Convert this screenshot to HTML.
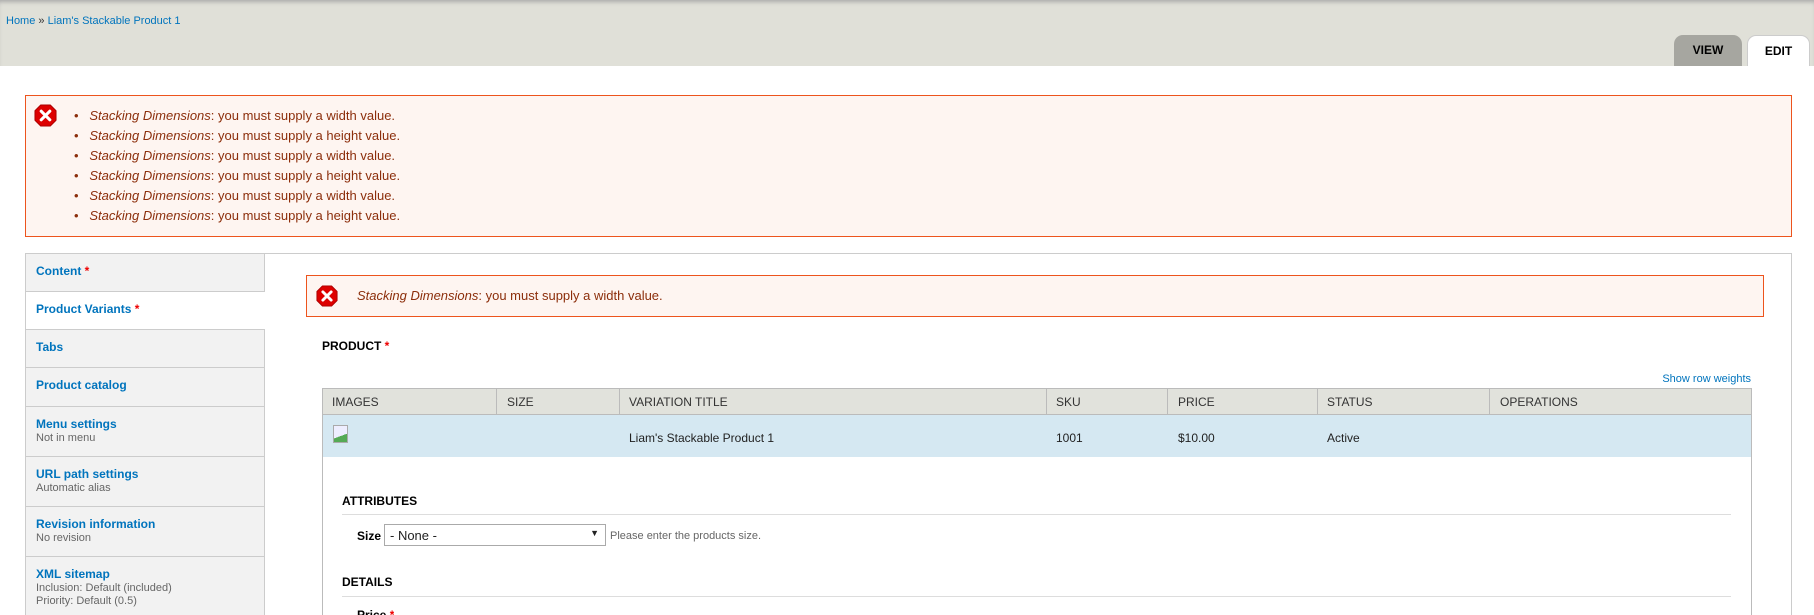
<!DOCTYPE html>
<html style="overflow:hidden;height:615px"><head><meta charset="utf-8"><style>
*{margin:0;padding:0;box-sizing:border-box}
body{width:1814px;height:615px;overflow:hidden;background:#fff;font-family:"Liberation Sans",Arial,sans-serif;color:#333;position:relative}
.a{position:absolute}
a{color:#0074bd;text-decoration:none}
.hdr{left:0;top:0;width:1814px;height:66px;background:#e0e0d8;box-shadow:inset 0 4px 4px -2px #aaa}
.tab{top:35px;height:31px;border-radius:9px 9px 0 0;font-weight:bold;font-size:12px;color:#000;text-align:center;line-height:31px}
.err{background:#fef5f1;border:1px solid #ed541d;color:#8c2e0b;font-size:13px}
.icon{width:23px;height:23px}
.sb{left:25px;width:240px;background:#f2f2f2;border-bottom:1px solid #ccc;border-right:1px solid #ccc;border-left:1px solid #ccc;padding:10px 0 0 10px;font-size:12px}
.sb b{color:#0074bd;display:block;font-size:12px}
.sb span{color:#666;font-size:11px;display:block;line-height:13px;margin-top:1px}
.sb span.req,.req{color:#e00;display:inline;font-size:12px;margin:0}
.th{top:389px;height:26px;font-size:12px;color:#333;line-height:26px}
.td{top:431px;font-size:12px;color:#222}
.vd{top:389px;width:1px;height:26px;background:#bbb}
h4{font-size:12px;color:#000}
</style></head><body>
<div class="a hdr"></div>
<div class="a" style="left:6px;top:15px;font-size:11px"><a>Home</a> » <a>Liam's Stackable Product 1</a></div>
<div class="a tab" style="left:1674px;width:68px;background:#a6a6a0">VIEW</div>
<div class="a tab" style="left:1747px;width:63px;background:#fff;border:1px solid #ccc;border-bottom:none">EDIT</div>

<div class="a err" style="left:25px;top:95px;width:1767px;height:142px"></div>
<svg class="a icon" style="left:34px;top:104px" viewBox="0 0 24 24"><polygon points="7,1 17,1 23,7 23,17 17,23 7,23 1,17 1,7" fill="#d00" stroke="#a00" stroke-linejoin="round"/><path d="M7.5 7.5L16.5 16.5M16.5 7.5L7.5 16.5" stroke="#fff" stroke-width="3.2" stroke-linecap="round"/></svg>
<div class="a" style="left:74px;top:106px;font-size:13px;color:#8c2e0b;line-height:20.1px">
<div>•&nbsp;&nbsp;&nbsp;<i>Stacking Dimensions</i>: you must supply a width value.</div>
<div>•&nbsp;&nbsp;&nbsp;<i>Stacking Dimensions</i>: you must supply a height value.</div>
<div>•&nbsp;&nbsp;&nbsp;<i>Stacking Dimensions</i>: you must supply a width value.</div>
<div>•&nbsp;&nbsp;&nbsp;<i>Stacking Dimensions</i>: you must supply a height value.</div>
<div>•&nbsp;&nbsp;&nbsp;<i>Stacking Dimensions</i>: you must supply a width value.</div>
<div>•&nbsp;&nbsp;&nbsp;<i>Stacking Dimensions</i>: you must supply a height value.</div>
</div>

<div class="a" style="left:25px;top:253px;width:1767px;height:362px;border:1px solid #ccc;border-bottom:0"></div>
<div class="a sb" style="top:253px;height:39px;border-top:1px solid #ccc"><b>Content <span class="req">*</span></b></div>
<div class="a sb" style="top:292px;height:38px;background:#fff;border-right:none"><b>Product Variants <span class="req">*</span></b></div>
<div class="a sb" style="top:330px;height:38px"><b>Tabs</b></div>
<div class="a sb" style="top:368px;height:39px"><b>Product catalog</b></div>
<div class="a sb" style="top:407px;height:50px"><b>Menu settings</b><span>Not in menu</span></div>
<div class="a sb" style="top:457px;height:50px"><b>URL path settings</b><span>Automatic alias</span></div>
<div class="a sb" style="top:507px;height:50px"><b>Revision information</b><span>No revision</span></div>
<div class="a sb" style="top:557px;height:58px;border-bottom:0"><b>XML sitemap</b><span>Inclusion: Default (included)<br>Priority: Default (0.5)</span></div>

<div class="a err" style="left:306px;top:275px;width:1458px;height:42px"></div>
<svg class="a icon" style="left:316px;top:285px;width:22px;height:22px" viewBox="0 0 24 24"><polygon points="7,1 17,1 23,7 23,17 17,23 7,23 1,17 1,7" fill="#d00" stroke="#a00" stroke-linejoin="round"/><path d="M7.5 7.5L16.5 16.5M16.5 7.5L7.5 16.5" stroke="#fff" stroke-width="3.2" stroke-linecap="round"/></svg>
<div class="a" style="left:357px;top:288px;font-size:13px;color:#8c2e0b"><i>Stacking Dimensions</i>: you must supply a width value.</div>

<div class="a" style="left:322px;top:339px;font-size:12px;font-weight:bold;color:#000">PRODUCT <span class="req">*</span></div>
<div class="a" style="left:1656px;top:373px;font-size:11px;width:95px;text-align:right"><a>Show row weights</a></div>

<div class="a" style="left:322px;top:388px;width:1430px;height:227px;border:1px solid #bbb;border-bottom:0"></div>
<div class="a" style="left:323px;top:389px;width:1428px;height:26px;background:#e1e2dc;border-bottom:1px solid #bbb"></div>
<div class="a" style="left:323px;top:415px;width:1428px;height:42px;background:#d5e8f2"></div>
<div class="a vd" style="left:496px"></div><div class="a vd" style="left:619px"></div><div class="a vd" style="left:1046px"></div><div class="a vd" style="left:1167px"></div><div class="a vd" style="left:1317px"></div><div class="a vd" style="left:1489px"></div>
<div class="a th" style="left:332px">IMAGES</div>
<div class="a th" style="left:507px">SIZE</div>
<div class="a th" style="left:629px">VARIATION TITLE</div>
<div class="a th" style="left:1056px">SKU</div>
<div class="a th" style="left:1178px">PRICE</div>
<div class="a th" style="left:1327px">STATUS</div>
<div class="a th" style="left:1500px">OPERATIONS</div>
<div class="a" style="left:333px;top:425px;width:15px;height:18px;border:1px solid #aaa;background:linear-gradient(160deg,#eef 60%,#5a5 60%)"></div>
<div class="a td" style="left:629px">Liam's Stackable Product 1</div>
<div class="a td" style="left:1056px">1001</div>
<div class="a td" style="left:1178px">$10.00</div>
<div class="a td" style="left:1327px">Active</div>

<h4 class="a" style="left:342px;top:494px">ATTRIBUTES</h4>
<div class="a" style="left:342px;top:514px;width:1389px;height:1px;background:#ddd"></div>
<div class="a" style="left:357px;top:529px;font-size:12px;font-weight:bold;color:#000">Size</div>
<div class="a" style="left:384px;top:524px;width:222px;height:22px;border:1px solid #aaa;font-size:13px;padding:3px 5px;color:#222">- None -<span style="position:absolute;right:6px;top:3px;font-size:9px">▼</span></div>
<div class="a" style="left:610px;top:530px;font-size:11px;color:#666">Please enter the products size.</div>
<h4 class="a" style="left:342px;top:575px">DETAILS</h4>
<div class="a" style="left:342px;top:596px;width:1389px;height:1px;background:#ddd"></div>
<div class="a" style="left:357px;top:608px;font-size:12px;font-weight:bold;color:#000;height:7px;overflow:hidden;line-height:14px">Price <span class="req">*</span></div>
</body></html>
